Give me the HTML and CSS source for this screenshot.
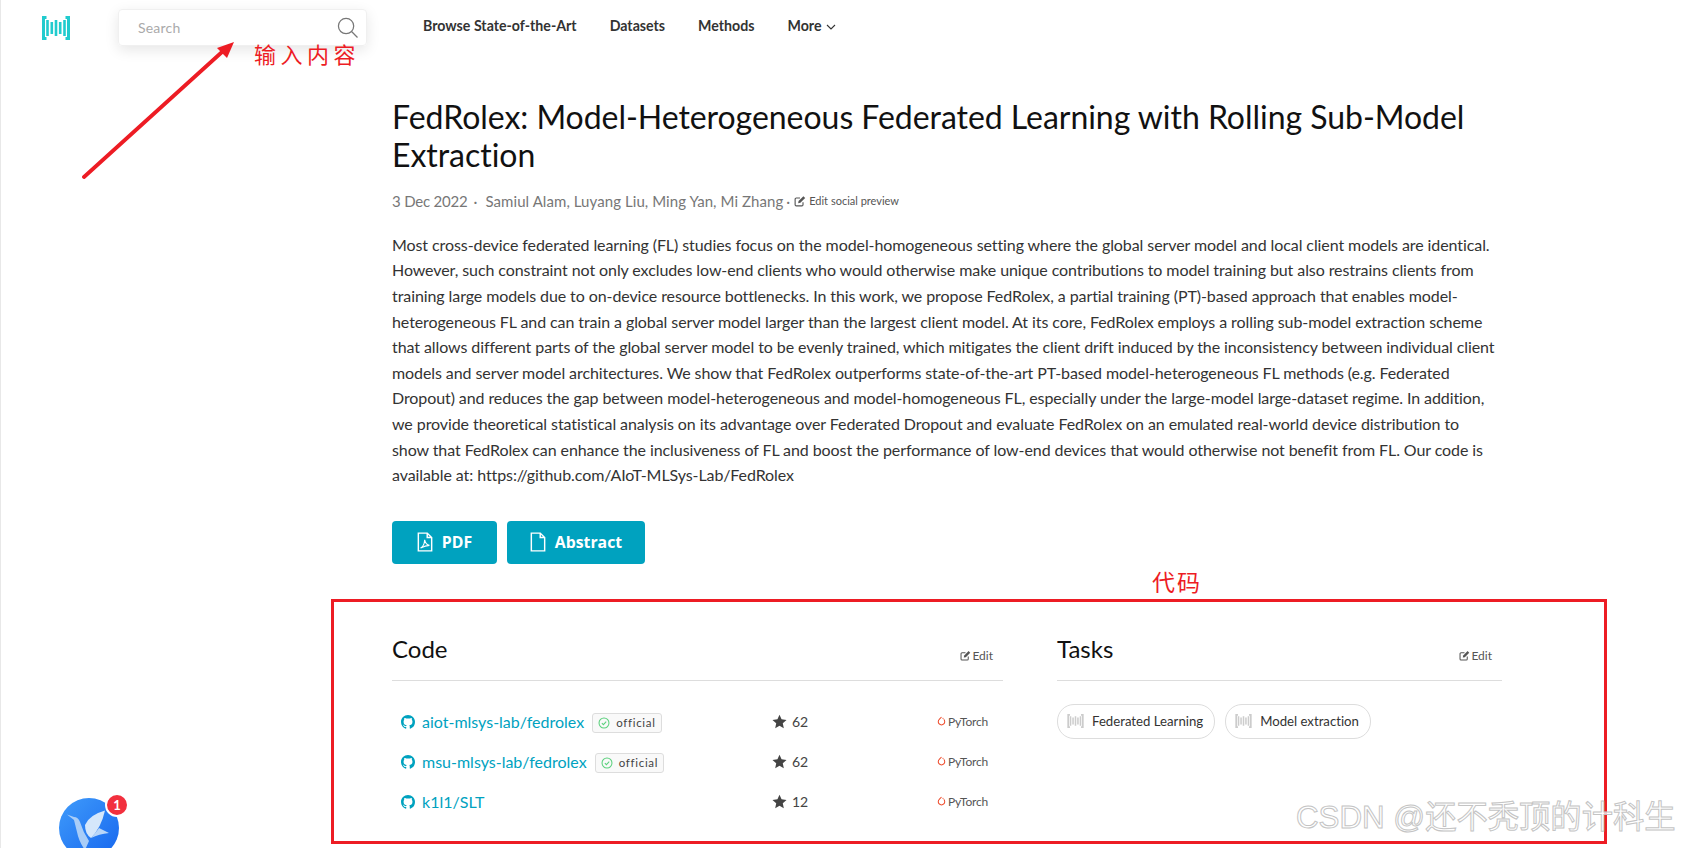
FILE: index.html
```html
<!DOCTYPE html>
<html lang="en">
	<head>
		<meta charset="UTF-8" />
		<meta name="viewport" content="width=device-width, initial-scale=1.0" />
		<title>FedRolex: Model-Heterogeneous Federated Learning with Rolling Sub-Model Extraction</title>
		<link rel="stylesheet" href="styles.css">
	</head>
	<body>
		<svg width="0" height="0" class="defs">
			<defs>
				<symbol id="i-logo" viewBox="0 0 28 24">
					<path d="M4.500 1.500H1.500v21h3M23.500 1.500h3v21h-3" fill="none" stroke="currentColor" stroke-width="3"/>
					<path d="M5.500 4v16M9.800 6v12M14 4v16M18.200 6v12M22.500 4v16" fill="none" stroke="currentColor" stroke-width="2.600"/>
				</symbol>
				<symbol id="i-edit" viewBox="0 0 16 16">
					<path d="M12 9.500V13a1.500 1.500 0 0 1-1.500 1.500H3A1.500 1.500 0 0 1 1.500 13V5.500A1.500 1.500 0 0 1 3 4h5" fill="none" stroke="currentColor" stroke-width="1.500"/>
					<path d="M5.500 11l.6-3L12.500 1.600l2.400 2.400L8.500 10.400z" fill="currentColor"/>
				</symbol>
				<symbol id="i-github" viewBox="0 0 16 16">
					<path fill="currentColor" d="M8 0C3.580 0 0 3.580 0 8c0 3.540 2.290 6.530 5.470 7.590.4.070.55-.17.55-.38 0-.19-.01-.82-.01-1.490-2.010.37-2.530-.49-2.690-.94-.09-.23-.48-.94-.82-1.130-.28-.15-.68-.52-.01-.53.63-.01 1.080.58 1.230.82.72 1.210 1.870.87 2.330.66.070-.52.280-.87.510-1.070-1.780-.2-3.640-.89-3.640-3.950 0-.87.310-1.590.820-2.150-.08-.2-.36-1.020.08-2.120 0 0 .67-.21 2.200.82.640-.18 1.320-.27 2-.27s1.360.09 2 .27c1.530-1.040 2.200-.82 2.200-.82.440 1.100.16 1.920.08 2.120.51.560.82 1.270.82 2.150 0 3.070-1.870 3.750-3.650 3.950.29.250.54.730.54 1.480 0 1.070-.01 1.930-.01 2.200 0 .21.150.46.550.38A8.010 8.010 0 0 0 16 8c0-4.420-3.580-8-8-8z"/>
				</symbol>
				<symbol id="i-star" viewBox="0 0 16 16">
					<path fill="currentColor" d="M8 .8l2.200 4.900 5.300.6-4 3.600 1.100 5.300L8 12.500l-4.600 2.700 1.100-5.300-4-3.600 5.300-.6z"/>
				</symbol>
				<symbol id="i-torch" viewBox="0 0 12 14">
					<path fill="none" stroke="currentColor" stroke-width="1.400" d="M6 1L3 4.200a4.300 4.300 0 1 0 6 0"/>
					<circle cx="8" cy="2.800" r=".8" fill="currentColor"/>
				</symbol>
				<symbol id="i-check" viewBox="0 0 14 14">
					<circle cx="7" cy="7" r="5.800" fill="none" stroke="currentColor" stroke-width="1.200"/>
					<path d="M4.500 7.200l1.800 1.800 3.300-3.500" fill="none" stroke="currentColor" stroke-width="1.200"/>
				</symbol>
			</defs>
		</svg>

		<header class="topbar">
			<svg class="logo"><use href="#i-logo"/></svg>
			<div class="search">
				<span class="search-text">Search</span>
				<svg class="search-icon" viewBox="0 0 22 22">
					<circle cx="9.500" cy="9.500" r="8" fill="none" stroke="currentColor" stroke-width="1.300"/>
					<path d="M15.500 15.500l6 6" stroke="currentColor" stroke-width="1.300"/>
				</svg>
			</div>
			<nav class="nav">
				<a>Browse State-of-the-Art</a>
				<a>Datasets</a>
				<a>Methods</a>
				<a>More
					<svg class="caret" viewBox="0 0 10 6"><path d="M1 1l4 4 4-4" fill="none" stroke="currentColor" stroke-width="1.100"/></svg>
				</a>
			</nav>
		</header>

		<main class="paper">
			<h1>FedRolex: Model-Heterogeneous Federated Learning with Rolling Sub-Model Extraction</h1>
			<div class="meta">
				<span class="date">3 Dec 2022</span>
				<span class="dot">·</span>
				<span class="authors">Samiul Alam, Luyang Liu, Ming Yan, Mi Zhang</span>
				<span class="dot-tight">·</span>
				<a class="social"><svg class="edit"><use href="#i-edit"/></svg>Edit social preview</a>
			</div>
			<p class="abstract">Most cross-device federated learning (FL) studies focus on the model-homogeneous setting where the global server model and local client models are identical. However, such constraint not only excludes low-end clients who would otherwise make unique contributions to model training but also restrains clients from training large models due to on-device resource bottlenecks. In this work, we propose FedRolex, a partial training (PT)-based approach that enables model-heterogeneous FL and can train a global server model larger than the largest client model. At its core, FedRolex employs a rolling sub-model extraction scheme that allows different parts of the global server model to be evenly trained, which mitigates the client drift induced by the inconsistency between individual client models and server model architectures. We show that FedRolex outperforms state-of-the-art PT-based model-heterogeneous FL methods (e.g. Federated Dropout) and reduces the gap between model-heterogeneous and model-homogeneous FL, especially under the large-model large-dataset regime. In addition, we provide theoretical statistical analysis on its advantage over Federated Dropout and evaluate FedRolex on an emulated real-world device distribution to show that FedRolex can enhance the inclusiveness of FL and boost the performance of low-end devices that would otherwise not benefit from FL. Our code is available at: https://github.com/AIoT-MLSys-Lab/FedRolex</p>
			<div class="buttons">
				<a class="btn btn-pdf">
					<svg class="btn-icon" viewBox="0 0 14 18">
						<path d="M1 1h8l4 4v12H1z M9 1v4h4" fill="none" stroke="currentColor" stroke-width="1.300"/>
						<path d="M3 14.500c2-1 3.500-4 3.700-7.500.6 3 2 4.500 4.300 5-2.500 0-5 .8-8 2.500z" fill="none" stroke="currentColor" stroke-width="1"/>
					</svg>
					PDF
				</a>
				<a class="btn btn-abstract">
					<svg class="btn-icon" viewBox="0 0 14 18">
						<path d="M1 1h8l4 4v12H1z M9 1v4h4" fill="none" stroke="currentColor" stroke-width="1.300"/>
					</svg>
					Abstract
				</a>
			</div>

			<div class="columns">
				<section class="code-col">
					<div class="section-head">
						<h2>Code</h2>
						<a class="edit-link"><svg class="edit"><use href="#i-edit"/></svg>Edit</a>
					</div>
					<div class="repo-row">
						<div class="repo">
							<svg class="gh"><use href="#i-github"/></svg>
							<a>aiot-mlsys-lab/fedrolex</a>
							<span class="official"><svg class="check"><use href="#i-check"/></svg>official</span>
						</div>
						<div class="stars"><svg class="star"><use href="#i-star"/></svg>62</div>
						<div class="framework"><svg class="torch"><use href="#i-torch"/></svg>PyTorch</div>
					</div>
					<div class="repo-row">
						<div class="repo">
							<svg class="gh"><use href="#i-github"/></svg>
							<a>msu-mlsys-lab/fedrolex</a>
							<span class="official"><svg class="check"><use href="#i-check"/></svg>official</span>
						</div>
						<div class="stars"><svg class="star"><use href="#i-star"/></svg>62</div>
						<div class="framework"><svg class="torch"><use href="#i-torch"/></svg>PyTorch</div>
					</div>
					<div class="repo-row">
						<div class="repo">
							<svg class="gh"><use href="#i-github"/></svg>
							<a>k1l1/SLT</a>
						</div>
						<div class="stars"><svg class="star"><use href="#i-star"/></svg>12</div>
						<div class="framework"><svg class="torch"><use href="#i-torch"/></svg>PyTorch</div>
					</div>
				</section>
				<section class="tasks-col">
					<div class="section-head">
						<h2>Tasks</h2>
						<a class="edit-link"><svg class="edit"><use href="#i-edit"/></svg>Edit</a>
					</div>
					<div class="chips">
						<a class="chip"><svg class="chip-icon"><use href="#i-logo"/></svg>Federated Learning</a>
						<a class="chip"><svg class="chip-icon"><use href="#i-logo"/></svg>Model extraction</a>
					</div>
				</section>
			</div>
		</main>

		<!-- annotations drawn over the screenshot -->
		<svg class="arrow" viewBox="0 0 170 150">
			<path d="M2 137L140 12" stroke="#ed1c24" stroke-width="3.800" stroke-linecap="round"/>
			<path d="M152 2L135 8l10 10z" fill="#ed1c24"/>
		</svg>
		<div class="note note-input">输入内容</div>
		<div class="note note-code">代码</div>
		<div class="red-box"></div>
		<div class="watermark">CSDN @还不秃顶的计科生</div>

		<div class="bird">
			<svg viewBox="0 0 60 60" width="60" height="60">
				<defs>
					<linearGradient id="bird-bg" x1="0" y1="0" x2="1" y2="1">
						<stop offset="0" stop-color="#3f9bfb"/>
						<stop offset="1" stop-color="#1666ee"/>
					</linearGradient>
				</defs>
				<circle cx="30" cy="30" r="30" fill="url(#bird-bg)"/>
				<path d="M8 16.500L15 19Q19 19 21 24Q24 34 30 43L26 52Q20 44 18 34Q16 26 15 22z" fill="#a9cdf7"/>
				<path d="M46 12.500Q30 17 26 27Q26 36 32 40Q42 30 46 12.500z" fill="#d5e7fb"/>
				<path d="M32 40Q38 33 40 30L50 35Q40 36 32 40z" fill="#b9d6f8"/>
			</svg>
			<span class="badge">1</span>
		</div>
	</body>
</html>
```

FILE: styles.css
```css
* {
	box-sizing: border-box;
}
html, body {
	height: 848px;
	overflow: hidden;
}
body {
	margin: 0;
	position: relative;
	background: #fff;
	border-left: 1px solid #e8e8e8;
	color: #212529;
	font-family: Lato, sans-serif;
	font-variant-ligatures: none;
}
a {
	text-decoration: none;
}
.defs {
	position: absolute;
}
.topbar {
	display: flex;
	align-items: flex-start;
	height: 68px;
	padding: 9px 0 0 41px;
}
.logo {
	width: 28px;
	height: 24px;
	margin-top: 7px;
	color: #21cbce;
}
.search {
	display: flex;
	justify-content: space-between;
	align-items: center;
	width: 249px;
	height: 37px;
	margin-left: 48px;
	padding: 0 8px 0 19px;
	border: 1px solid #f0f0f0;
	border-radius: 4px;
	box-shadow: 0 4px 14px rgba(0, 0, 0, 0.1);
}
.search-text {
	color: #aaa;
	font-size: 14px;
	letter-spacing: 0.2px;
}
.search-icon {
	width: 21px;
	height: 21px;
	color: #777;
}
.nav {
	display: flex;
	gap: 33px;
	margin-left: 56px;
	padding-top: 7px;
	font-size: 14.200px;
	font-weight: 700;
	color: #333;
	line-height: 20px;
}
.caret {
	width: 10px;
	height: 6px;
	margin-left: 1px;
	vertical-align: 1px;
}
.paper {
	width: 1502px;
	padding: 30px 0 0 391px;
}
h1 {
	margin: 0;
	font-size: 32px;
	font-weight: 400;
	line-height: 38.400px;
	letter-spacing: -0.04px;
	color: #111;
}
.meta {
	display: flex;
	align-items: center;
	margin-top: 14px;
	height: 24px;
	font-size: 15px;
	color: #777;
	white-space: nowrap;
}
.date {
	letter-spacing: -0.2px;
}
.authors {
	letter-spacing: 0.07px;
}
.dot {
	margin: 0 8px 0 6px;
}
.dot-tight {
	margin: 0 4px 0 3px;
}
.social {
	display: flex;
	align-items: center;
	font-size: 11px;
	color: #555;
}
.edit {
	width: 12px;
	height: 12px;
	margin-right: 3px;
}
.abstract {
	max-width: 1104px;
	margin: 19px 0 0;
	font-size: 16px;
	line-height: 25.600px;
	letter-spacing: -0.085px;
	color: #333;
}
.buttons {
	display: flex;
	gap: 10px;
	margin-top: 33px;
}
.btn {
	display: flex;
	align-items: center;
	justify-content: center;
	gap: 9px;
	height: 43px;
	border-radius: 4px;
	background: #00a2bf;
	color: #fff;
	font-family: "Open Sans", sans-serif;
	font-size: 15.800px;
	font-weight: 700;
}
.btn-pdf {
	width: 105px;
}
.btn-abstract {
	width: 138px;
}
.btn-icon {
	width: 16px;
	height: 20px;
}
.columns {
	display: grid;
	grid-template-columns: 611px 445px;
	gap: 54px;
	margin-top: 71px;
}
.section-head {
	display: flex;
	justify-content: space-between;
	align-items: flex-end;
	height: 46px;
	padding: 0 10px 17px 0;
	border-bottom: 1px solid #ddd;
}
h2 {
	margin: 0;
	font-size: 24px;
	font-weight: 400;
	line-height: 29px;
	color: #111;
}
.edit-link {
	display: flex;
	align-items: center;
	font-size: 12px;
	color: #555;
	line-height: 14px;
}
.edit-link .edit {
	width: 11px;
	height: 11px;
	margin-right: 1px;
}
.repo-row {
	display: flex;
	align-items: center;
	height: 40px;
	padding-left: 9px;
}
.section-head + .repo-row {
	margin-top: 21px;
}
.repo {
	display: flex;
	align-items: center;
	width: 371px;
	font-size: 16px;
	color: #00a2bf;
}
.gh {
	width: 14px;
	height: 14px;
	margin-right: 7px;
}
.official {
	display: flex;
	align-items: center;
	height: 20px;
	margin: 2px 0 0 8px;
	padding: 0 5px;
	border: 1px solid #ddd;
	border-radius: 3px;
	background: #f9f9f9;
	color: #444;
	font-size: 11.500px;
	letter-spacing: 0.7px;
}
.check {
	width: 12px;
	height: 12px;
	margin-right: 6px;
	color: #5ad07c;
}
.stars {
	display: flex;
	align-items: center;
	width: 165px;
	font-size: 14px;
	color: #444;
}
.star {
	width: 15px;
	height: 15px;
	margin-right: 5px;
	color: #444;
}
.framework {
	display: flex;
	align-items: center;
	font-size: 12px;
	letter-spacing: -0.2px;
	color: #555;
}
.torch {
	width: 9px;
	height: 11px;
	margin-right: 2px;
	color: #ee4c2c;
}
.chips {
	display: flex;
	gap: 10px;
	margin-top: 23px;
}
.chip {
	display: flex;
	align-items: center;
	height: 35px;
	padding: 0 11px 0 9px;
	border: 1px solid #ddd;
	border-radius: 17px;
	font-size: 13.200px;
	color: #333;
	white-space: nowrap;
}
.chip-icon {
	width: 17px;
	height: 14px;
	margin-right: 8px;
	color: #ccc;
}

/* annotations */
.arrow {
	position: absolute;
	left: 81px;
	top: 40px;
	width: 170px;
	height: 150px;
}
.note {
	position: absolute;
	color: #ed1c24;
	font-family: "Noto Sans CJK SC", sans-serif;
	font-size: 22px;
	line-height: 28px;
}
.note-input {
	left: 253px;
	top: 39px;
	letter-spacing: 4.500px;
}
.note-code {
	left: 1151px;
	top: 567px;
	font-size: 23px;
	letter-spacing: 2px;
}
.red-box {
	position: absolute;
	left: 330px;
	top: 599px;
	width: 1276px;
	height: 245px;
	border: 3px solid #ed1c24;
}
.watermark {
	position: absolute;
	left: 1295px;
	top: 796px;
	color: rgba(255, 255, 255, 0.75);
	font-family: "Liberation Sans", "Noto Sans CJK SC", sans-serif;
	font-size: 31.300px;
	line-height: 44px;
	white-space: nowrap;
	-webkit-text-stroke: 1px #c4c4c4;
}
.bird {
	position: absolute;
	left: 58px;
	top: 798px;
	width: 60px;
	height: 60px;
}
.badge {
	position: absolute;
	left: 46px;
	top: -5px;
	width: 24px;
	height: 24px;
	border: 2px solid #fff;
	border-radius: 50%;
	background: #f2303e;
	color: #fff;
	font-size: 13px;
	font-weight: 700;
	line-height: 20px;
	text-align: center;
}
```
